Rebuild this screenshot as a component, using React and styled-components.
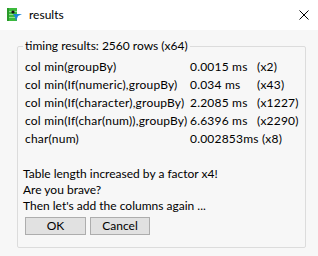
import styled, { createGlobalStyle } from "styled-components";

const GlobalStyle = createGlobalStyle`
  html, body {
    margin: 0;
    padding: 0;
    background: #f7f7f7;
  }
  body {
    font-family: Lato, "Noto Sans", sans-serif;
    font-size: 12px;
    color: #000;
  }
`;

const Window = styled.div`
  width: 318px;
  height: 256px;
  display: flex;
  flex-direction: column;
  overflow: hidden;
`;

const TitleBar = styled.div`
  height: 30px;
  flex: none;
  background: #fff;
  display: flex;
  align-items: center;
  padding: 0 9px 0 7px;
`;

const Title = styled.span`
  flex: 1;
  margin-left: 6px;
  font-size: 12px;
  line-height: 16px;
`;

const Body = styled.div`
  flex: 1;
  background: #f7f7f7;
  padding: 8px 12px 8px 17px;
  display: flex;
`;

const GroupBox = styled.fieldset`
  flex: 1;
  margin: 0;
  padding: 0 7px 0 7px;
  border: 1px solid #dcdcdc;
  border-radius: 2px;
  min-width: 0;
`;

const Legend = styled.legend`
  padding: 0 2px;
  margin-left: -2px;
  line-height: 16px;
`;

const Table = styled.div`
  display: grid;
  grid-template-columns: 165px 67px auto;
  grid-auto-rows: 18px;
  align-items: center;
  margin-top: 4px;
  white-space: nowrap;
`;

const Cell = styled.span`
  line-height: 18px;
  grid-column: span ${(p) => p.$span || 1};
  letter-spacing: 0.2px;
`;

const Message = styled.div`
  margin-top: 18px;
  margin-left: -2px;
  line-height: 16px;
`;

const Buttons = styled.div`
  display: flex;
  gap: 4px;
  margin-top: 3px;
`;

const Button = styled.button`
  width: ${(p) => p.$width}px;
  height: 18px;
  padding: 0;
  background: #e1e1e1;
  border: 1px solid #adadad;
  border-radius: 0;
  font: inherit;
  line-height: 16px;
  color: #000;
`;

const AppIcon = () => (
  <svg width="16" height="14" viewBox="0 0 16 14">
    <rect x="0" y="0" width="10" height="13" fill="#3cba3c" />
    <rect x="0" y="3" width="10" height="1" fill="#8fe08f" />
    <rect x="0" y="6" width="10" height="1" fill="#8fe08f" />
    <rect x="0" y="9" width="10" height="1" fill="#8fe08f" />
    <rect x="0" y="0" width="2" height="13" fill="#2a9a2a" />
    <circle cx="6" cy="4" r="1.6" fill="#111" />
    <path d="M6 6 L15 6 L11 8 L9 13 L8 9 Z" fill="#1e86d6" />
  </svg>
);

const CloseIcon = () => (
  <svg width="10" height="10" viewBox="0 0 10 10">
    <path d="M0.5 0.5 L9.5 9.5 M9.5 0.5 L0.5 9.5" stroke="#000" strokeWidth="1" />
  </svg>
);

const rows = [
  ["col min(groupBy)", "0.0015 ms", "(x2)"],
  ["col min(If(numeric),groupBy)", "0.034 ms", "(x43)"],
  ["col min(If(character),groupBy)", "2.2085 ms", "(x1227)"],
  ["col min(If(char(num)),groupBy)", "6.6396 ms", "(x2290)"],
  ["char(num)", "0.002853ms (x8)"],
];

export default function App() {
  return (
    <Window>
      <GlobalStyle />
      <TitleBar>
        <AppIcon />
        <Title>results</Title>
        <CloseIcon />
      </TitleBar>
      <Body>
        <GroupBox>
          <Legend>timing results: 2560 rows (x64)</Legend>
          <Table>
            {rows.map((r) =>
              r.map((c, i) => (
                <Cell key={r[0] + i} $span={r.length === 2 && i === 1 ? 2 : 1}>
                  {c}
                </Cell>
              ))
            )}
          </Table>
          <Message>
            Table length increased by a factor x4!
            <br />
            Are you brave?
            <br />
            Then let's add the columns again ...
          </Message>
          <Buttons>
            <Button $width={61}>OK</Button>
            <Button $width={60}>Cancel</Button>
          </Buttons>
        </GroupBox>
      </Body>
    </Window>
  );
}
